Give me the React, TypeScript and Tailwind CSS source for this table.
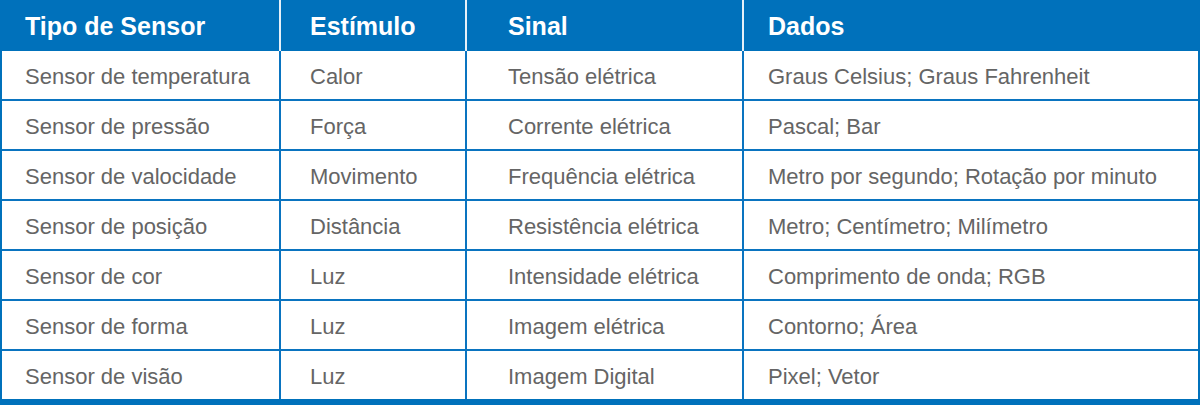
import React from "react";

const rows: [string, string, string, string][] = [
  ["Sensor de temperatura", "Calor", "Tensão elétrica", "Graus Celsius; Graus Fahrenheit"],
  ["Sensor de pressão", "Força", "Corrente elétrica", "Pascal; Bar"],
  ["Sensor de valocidade", "Movimento", "Frequência elétrica", "Metro por segundo; Rotação por minuto"],
  ["Sensor de posição", "Distância", "Resistência elétrica", "Metro; Centímetro; Milímetro"],
  ["Sensor de cor", "Luz", "Intensidade elétrica", "Comprimento de onda; RGB"],
  ["Sensor de forma", "Luz", "Imagem elétrica", "Contorno; Área"],
  ["Sensor de visão", "Luz", "Imagem Digital", "Pixel; Vetor"],
];

const pads = ["pl-[23px]", "pl-[29px]", "pl-[41px]", "pl-[24px]"];

export default function App() {
  return (
    <div
      className="w-[1200px] h-[405px] bg-[#0071bb] px-[2px] pb-[6px] flex flex-col"
      style={{ fontFamily: '"Liberation Sans", Arial, Helvetica, sans-serif' }}
    >
      <div className="grid grid-cols-[277px_184px_275px_454px] gap-x-[2px] bg-[#e6f0f8] h-[51px] shrink-0">
        {["Tipo de Sensor", "Estímulo", "Sinal", "Dados"].map((h, i) => (
          <div
            key={h}
            className={`bg-[#0071bb] text-white font-bold text-[25px] flex items-center pt-[3px] ${pads[i]}`}
          >
            {h}
          </div>
        ))}
      </div>
      <div className="grid grid-cols-[277px_184px_275px_454px] grid-rows-[repeat(7,48px)] gap-[2px] bg-[#0a74c0]">
        {rows.map((r, ri) =>
          r.map((c, ci) => (
            <div
              key={`${ri}-${ci}`}
              className={`bg-white text-[#656565] text-[22px] flex items-center pt-[3px] whitespace-nowrap ${pads[ci]}`}
            >
              {c}
            </div>
          ))
        )}
      </div>
    </div>
  );
}
